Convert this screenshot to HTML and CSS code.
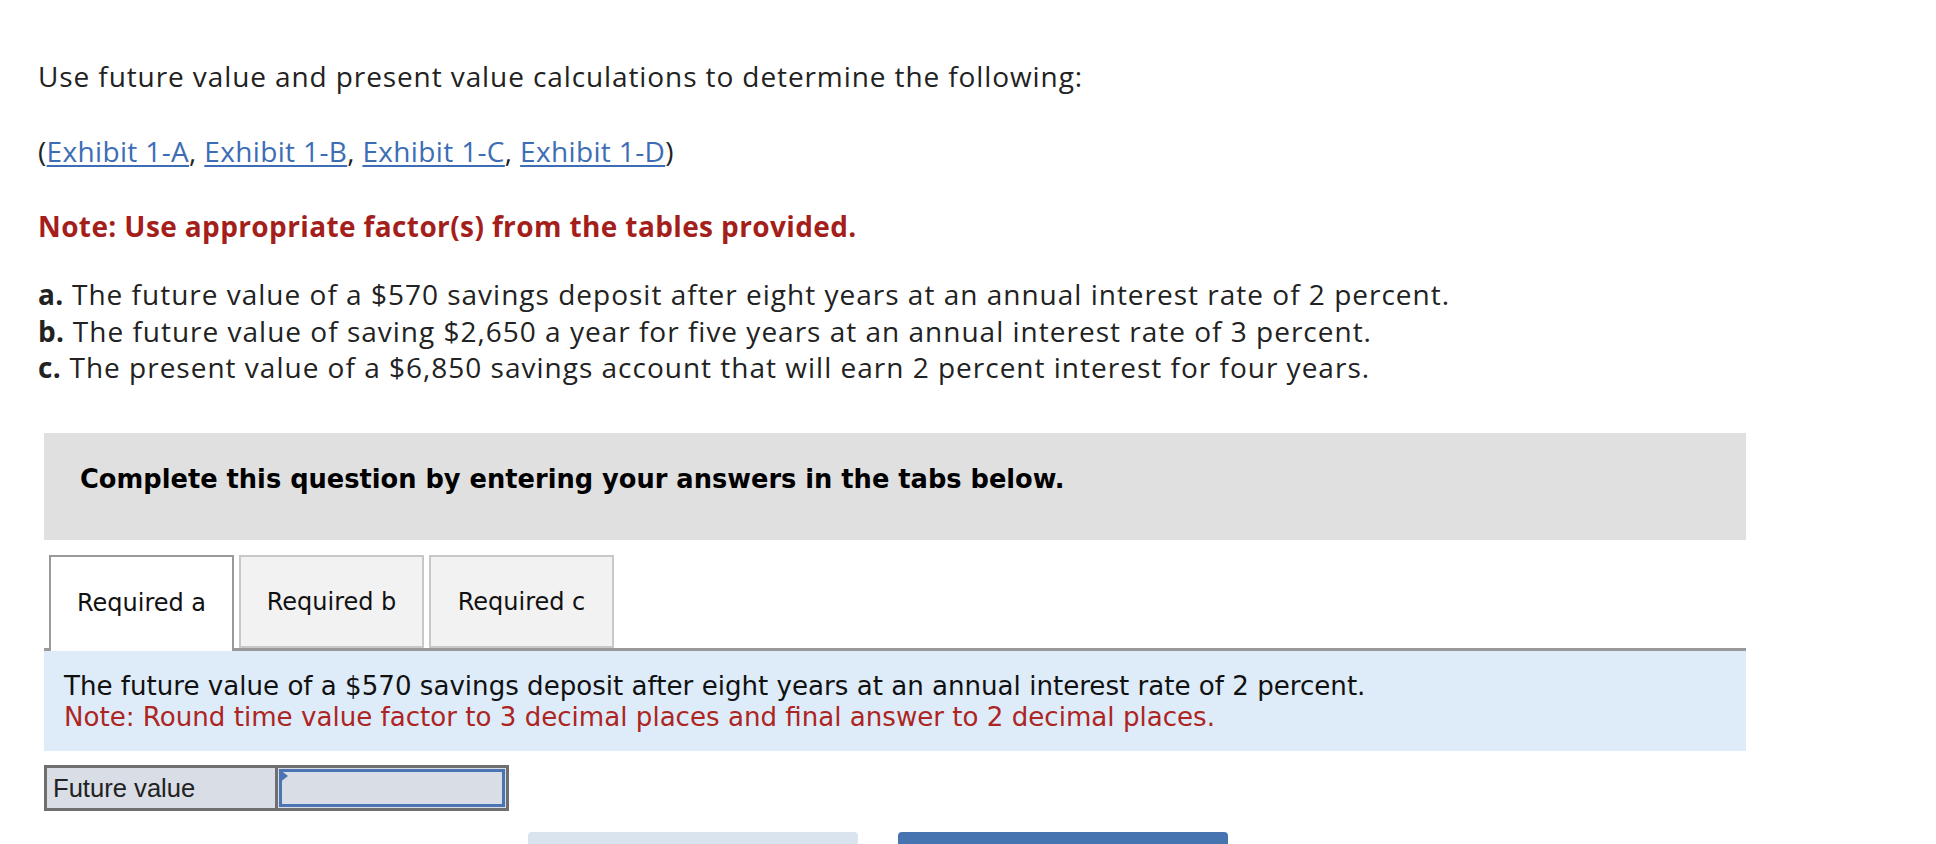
FILE: index.html
```html
<!DOCTYPE html>
<html lang="en">
<head>
<meta charset="utf-8">
<title>Future value and present value</title>
<link rel="stylesheet" href="styles.css">
</head>
<body>
<div class="page">
  <p class="intro">Use future value and present value calculations to determine the following:</p>
  <p class="exhibits">(<a href="#">Exhibit 1-A</a>, <a href="#">Exhibit 1-B</a>, <a href="#">Exhibit 1-C</a>, <a href="#">Exhibit 1-D</a>)</p>
  <p class="note">Note: Use appropriate factor(s) from the tables provided.</p>
  <div class="parts">
    <div class="part"><b>a.</b> The future value of a $570 savings deposit after eight years at an annual interest rate of 2 percent.</div>
    <div class="part"><b>b.</b> The future value of saving $2,650 a year for five years at an annual interest rate of 3 percent.</div>
    <div class="part"><b>c.</b> The present value of a $6,850 savings account that will earn 2 percent interest for four years.</div>
  </div>

  <div class="instructions">Complete this question by entering your answers in the tabs below.</div>

  <div class="tabs">
    <div class="tab active">Required a</div>
    <div class="tab">Required b</div>
    <div class="tab">Required c</div>
  </div>

  <div class="panel">
    <div class="panel-text">The future value of a $570 savings deposit after eight years at an annual interest rate of 2 percent.</div>
    <div class="panel-note">Note: Round time value factor to 3 decimal places and final answer to 2 decimal places.</div>
  </div>

  <div class="answer-row">
    <div class="answer-label">Future value</div>
    <div class="answer-input"><span class="flag"></span></div>
  </div>

  <div class="buttons">
    <div class="btn btn-prev"></div>
    <div class="btn btn-next"></div>
  </div>
</div>
</body>
</html>
```

FILE: styles.css
```css
html, body {
  margin: 0;
  padding: 0;
  background: #ffffff;
  overflow: hidden;
}

.page {
  padding: 58px 0 0 38px;
  width: 1708px;
  color: #222222;
  font-family: "Open Sans", "Noto Sans", sans-serif;
}

.intro, .exhibits, .note {
  margin: 0;
  font-size: 28px;
  line-height: 36px;
}

.intro {
  letter-spacing: 0.9px;
}

.exhibits {
  margin-top: 39px;
  letter-spacing: 0.35px;
}

.exhibits a {
  color: #3d6db5;
  text-decoration: underline;
  text-underline-offset: 3px;
  text-decoration-thickness: 2px;
}

.note {
  margin-top: 39px;
  color: #a41f1b;
  font-weight: 700;
  letter-spacing: 0.38px;
}

.parts {
  margin-top: 32px;
  font-size: 28px;
  line-height: 36.5px;
  letter-spacing: 1px;
}

.part b {
  font-weight: 700;
  letter-spacing: 0.4px;
}

.instructions {
  margin: 47px 0 0 6px;
  width: 1702px;
  height: 107px;
  box-sizing: border-box;
  padding: 29px 0 0 36px;
  background: #e0e0e0;
  color: #000000;
  font-family: "DejaVu Sans", Verdana, sans-serif;
  font-weight: 700;
  font-size: 25.7px;
  line-height: 34px;
}

.tabs {
  display: flex;
  align-items: flex-end;
  margin: 15px 0 0 6px;
  padding-left: 5px;
  width: 1702px;
  box-sizing: border-box;
  height: 96px;
  border-bottom: 3px solid #999999;
  font-family: "DejaVu Sans", Verdana, sans-serif;
  font-size: 24px;
  color: #111111;
}

.tab {
  box-sizing: border-box;
  width: 185px;
  height: 93px;
  margin-right: 5px;
  border: 2px solid #c8c8c8;
  background: #f2f2f2;
  display: flex;
  align-items: center;
  justify-content: center;
  padding-top: 2px;
}

.tab.active {
  height: 96px;
  margin-bottom: -3px;
  border: 2px solid #999999;
  border-bottom: 0;
  padding-top: 0;
  padding-bottom: 2px;
  background: #ffffff;
}

.panel {
  margin-left: 6px;
  width: 1702px;
  box-sizing: border-box;
  padding: 20px 0 18px 20px;
  background: #deebf8;
  font-family: "DejaVu Sans", Verdana, sans-serif;
  font-size: 26.1px;
  line-height: 31px;
  color: #111111;
}

.panel-note {
  color: #ad2523;
}

.answer-row {
  display: flex;
  margin: 14px 0 0 6px;
  width: 465px;
  height: 46px;
  box-sizing: border-box;
  border: 3px solid #6f6f6f;
  background: #d8dde6;
}

.answer-label {
  width: 231px;
  box-sizing: border-box;
  border-right: 3px solid #6f6f6f;
  padding-left: 6px;
  font-family: "Liberation Sans", Arial, sans-serif;
  font-size: 25.6px;
  line-height: 40px;
  color: #222222;
}

.answer-input {
  flex: 1;
  position: relative;
  border: 3px solid #4a74b4;
  margin: 1px;
}

.flag {
  position: absolute;
  left: -3px;
  top: -3px;
  width: 0;
  height: 0;
  border-top: 7px solid transparent;
  border-bottom: 7px solid transparent;
  border-left: 9px solid #4a74b4;
}

.buttons {
  display: flex;
  gap: 40px;
  margin: 21px 0 0 490px;
}

.btn {
  width: 330px;
  height: 40px;
  border-radius: 4px 4px 0 0;
}

.btn-prev {
  background: #dae4ef;
}

.btn-next {
  background: #4674b1;
}
```
